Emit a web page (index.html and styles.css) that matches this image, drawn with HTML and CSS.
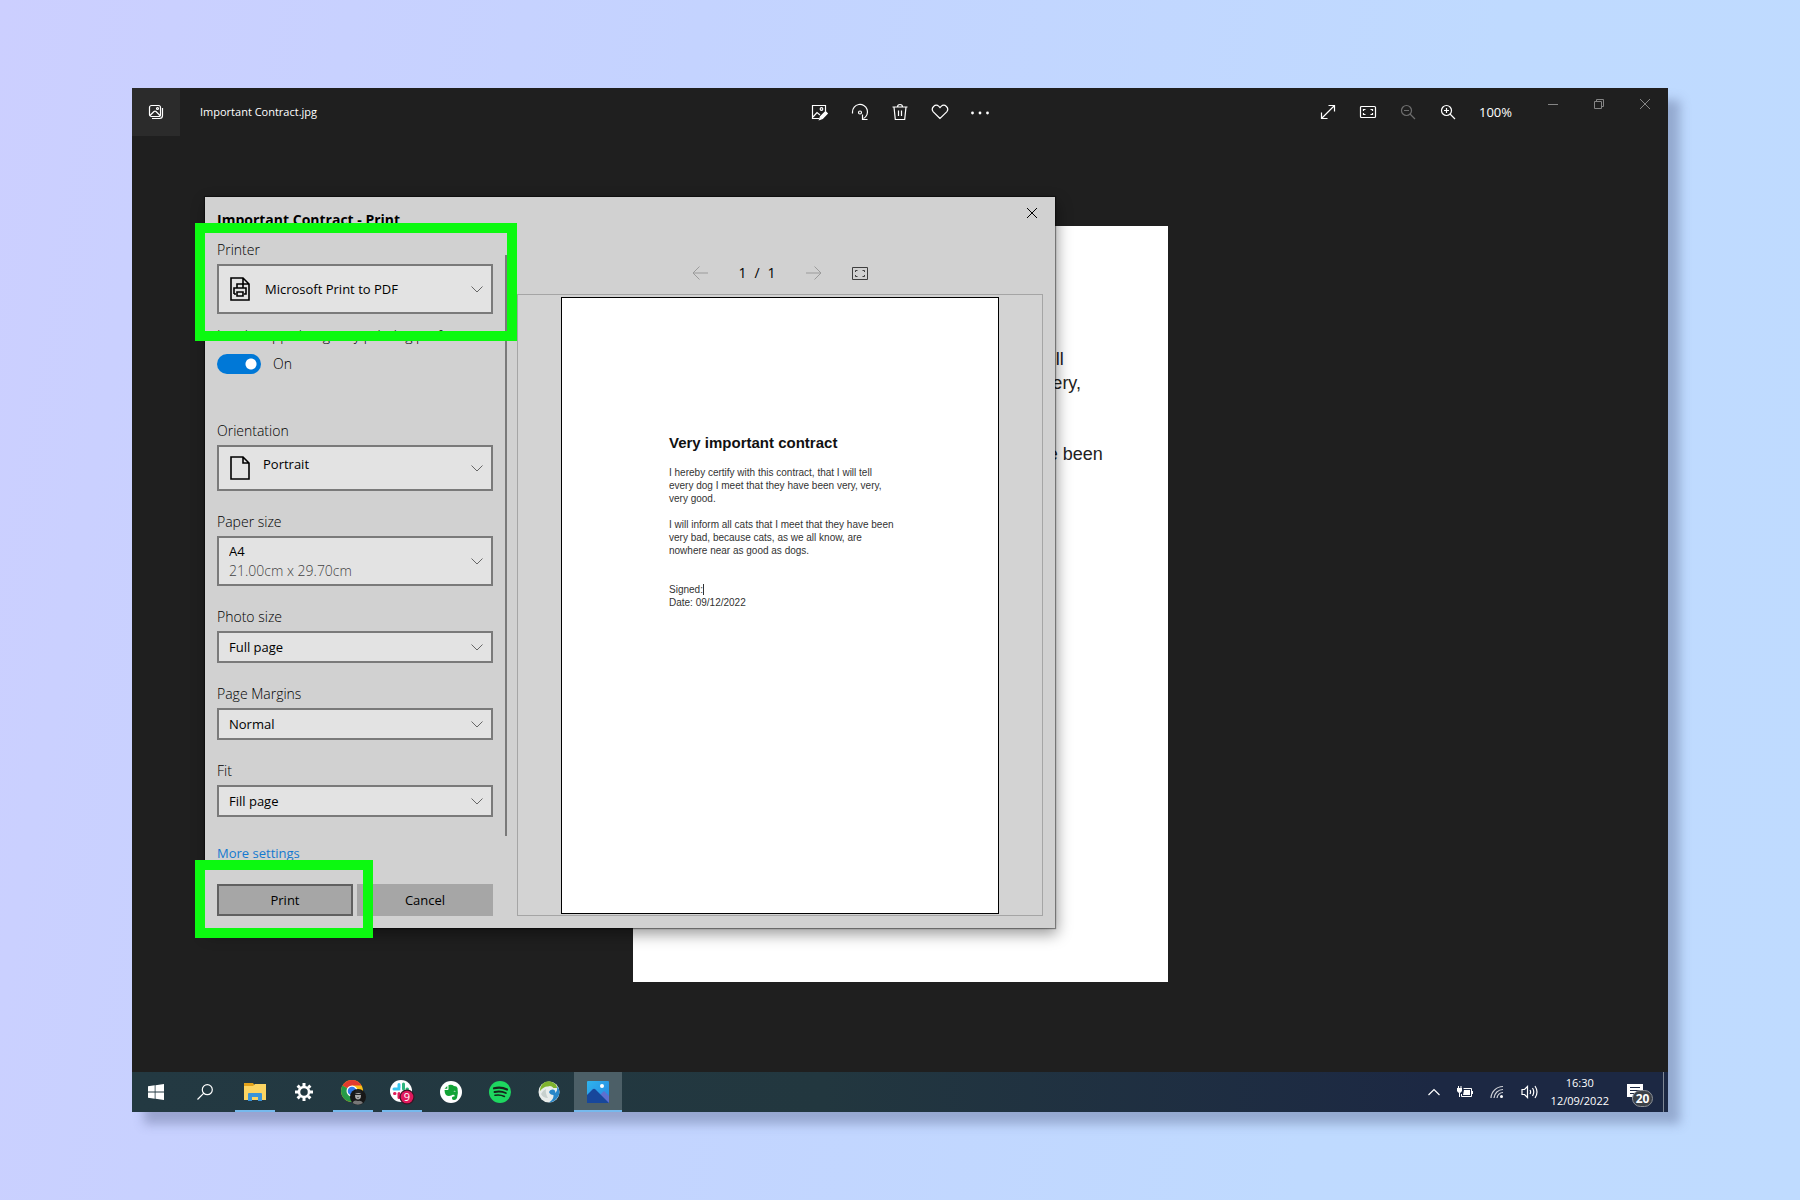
FILE: index.html
```
<!DOCTYPE html>
<html lang="en">
  <head>
    <meta charset="UTF-8" />
    <meta name="viewport" content="width=device-width, initial-scale=1.0" />
    <title>Important Contract - Print</title>
    <link rel="stylesheet" href="styles.css">
  </head>
  <body>
    <div class="desktop">
      <header class="titlebar">
        <div class="titlebar-left">
          <button type="button" class="gallery-btn" aria-label="All photos">
            <svg width="16" height="16" viewBox="0 0 16 16" class="line-icon">
              <rect x="1.5" y="1.5" width="11" height="11" rx="2" />
              <path d="M2 11.5 L6 7.5 Q7 6.7 8 7.5 L12 11.5 M14.5 4 V11.5 A3 3 0 0 1 11.500 14.500 H4" />
              <circle cx="9.500" cy="4.500" r="1" />
            </svg>
          </button>
          <span class="file-name">Important Contract.jpg</span>
        </div>
        <div class="tools">
          <button type="button" class="tool" aria-label="Edit">
            <svg width="18" height="18" viewBox="0 0 18 18" class="line-icon">
              <path d="M8 15.500 H1.500 V2.500 H14.500 V8" />
              <circle cx="10.500" cy="6" r="1.300" />
              <path d="M2 14 L6 9.500 L9 12" />
              <path d="M8.500 16.500 L9.500 13.500 L14.500 8.500 L16.300 10.500 L11.500 15.500 Z" fill="#fff" />
            </svg>
          </button>
          <button type="button" class="tool" aria-label="Rotate">
            <svg width="18" height="18" viewBox="0 0 18 18" class="line-icon">
              <path d="M1.500 10.500 V9 A7.500 7.500 0 1 1 12.500 15.500 M11.500 11.500 V16.500 H16.500" />
              <circle cx="9" cy="9.500" r="1.500" />
            </svg>
          </button>
          <button type="button" class="tool" aria-label="Delete">
            <svg width="18" height="18" viewBox="0 0 18 18" class="line-icon">
              <path d="M1.500 4 H16.500 M6.500 4 Q6.500 1.500 9 1.500 Q11.500 1.500 11.500 4 M3 4 L4.300 16.500 H13.700 L15 4 M7.500 7.500 V13 M10.500 7.500 V13" />
            </svg>
          </button>
          <button type="button" class="tool" aria-label="Favourite">
            <svg width="18" height="18" viewBox="0 0 18 18" class="line-icon">
              <path d="M9 15.500 L2.300 8.800 A3.900 3.900 0 0 1 7.900 3.400 L9 4.600 L10.100 3.400 A3.900 3.900 0 0 1 15.700 8.800 Z" />
            </svg>
          </button>
          <button type="button" class="tool" aria-label="More">
            <svg width="20" height="18" viewBox="0 0 20 18" fill="#fff">
              <circle cx="2.500" cy="10" r="1.400" />
              <circle cx="10" cy="10" r="1.400" />
              <circle cx="17.500" cy="10" r="1.400" />
            </svg>
          </button>
        </div>
        <div class="titlebar-right">
          <button type="button" class="tool" aria-label="Full screen">
            <svg width="16" height="16" viewBox="0 0 16 16" class="line-icon">
              <path d="M1.500 14.500 L14.500 1.500 M8.500 1.500 H14.500 V7.500 M1.500 8.500 V14.500 H7.500" />
            </svg>
          </button>
          <button type="button" class="tool" aria-label="Fit to window">
            <svg width="18" height="14" viewBox="0 0 18 14" class="line-icon">
              <rect x="1.500" y="1.500" width="15" height="11" rx="1" />
              <path d="M4.500 6 V4.500 H6.500 M11.500 4.500 H13.500 V6 M4.500 8 V9.500 H6.500 M11.500 9.500 H13.500 V8" />
            </svg>
          </button>
          <button type="button" class="tool" aria-label="Zoom out" disabled>
            <svg width="16" height="16" viewBox="0 0 16 16" class="line-icon">
              <circle cx="6.500" cy="6.500" r="5" />
              <path d="M10 10 L15 15 M4 6.500 H9" />
            </svg>
          </button>
          <button type="button" class="tool" aria-label="Zoom in">
            <svg width="16" height="16" viewBox="0 0 16 16" class="line-icon">
              <circle cx="6.500" cy="6.500" r="5" />
              <path d="M10 10 L15 15 M4 6.500 H9 M6.500 4 V9" />
            </svg>
          </button>
          <span class="zoom-level">100%</span>
          <div class="window-controls">
            <button type="button" aria-label="Minimise">
              <svg width="10" height="10" viewBox="0 0 10 10" class="thin-icon"><path d="M0 5.500 H10" /></svg>
            </button>
            <button type="button" aria-label="Restore">
              <svg width="10" height="10" viewBox="0 0 10 10" class="thin-icon"><path d="M.5 2.500 H7.500 V9.500 H.5 Z M2.500 2.500 V.5 H9.500 V7.500 H7.500" /></svg>
            </button>
            <button type="button" aria-label="Close">
              <svg width="10" height="10" viewBox="0 0 10 10" class="thin-icon"><path d="M0 0 L10 10 M10 0 L0 10" /></svg>
            </button>
          </div>
        </div>
      </header>

      <main class="viewer">
        <article class="photo">
          <p>I hereby certify with this contract, that I will tell<br>every dog I meet that they have been very, very,<br>very good.</p>
          <p>I will inform all cats that I meet that they have been</p>
        </article>

        <section class="dialog">
          <div class="options">
            <h1>Important Contract - Print</h1>
            <form id="printForm">
              <div class="field">
                <label for="printer">Printer</label>
                <div class="select tall">
                  <select id="printer" class="with-icon"><option>Microsoft Print to PDF</option></select>
                  <svg class="option-icon" width="20" height="24" viewBox="0 0 20 24">
                    <path d="M1 1 H13 L19 7 V23 H1 Z M13 1 V7 H19" />
                    <path d="M7 11 V7 H13 V11 M4 17 V11 H16 V17 H14 M4 17 H6 M7 15 H13 V19 H7 Z" />
                  </svg>
                  <svg class="chevron" width="12" height="7" viewBox="0 0 12 7"><path d="M.5 .5 L6 6 L11.500 .5" /></svg>
                </div>
              </div>
              <div class="manage">
                <label for="manage">Let the app change my printing preferences</label>
                <div class="toggle-row">
                  <input type="checkbox" id="manage" class="toggle" checked />
                  <span>On</span>
                </div>
              </div>
              <div class="field">
                <label for="orientation">Orientation</label>
                <div class="select medium">
                  <select id="orientation" class="with-icon"><option>Portrait</option></select>
                  <svg class="option-icon" width="20" height="24" viewBox="0 0 20 24">
                    <path d="M1 1 H13 L19 7 V23 H1 Z M13 1 V7 H19" />
                  </svg>
                  <svg class="chevron" width="12" height="7" viewBox="0 0 12 7"><path d="M.5 .5 L6 6 L11.500 .5" /></svg>
                </div>
              </div>
              <div class="field">
                <label for="paper">Paper size</label>
                <div class="select tall two-line">
                  <select id="paper"><option>A4</option></select>
                  <span class="detail">21.00cm x 29.70cm</span>
                  <svg class="chevron" width="12" height="7" viewBox="0 0 12 7"><path d="M.5 .5 L6 6 L11.500 .5" /></svg>
                </div>
              </div>
              <div class="field">
                <label for="photoSize">Photo size</label>
                <div class="select">
                  <select id="photoSize"><option>Full page</option></select>
                  <svg class="chevron" width="12" height="7" viewBox="0 0 12 7"><path d="M.5 .5 L6 6 L11.500 .5" /></svg>
                </div>
              </div>
              <div class="field">
                <label for="margins">Page Margins</label>
                <div class="select">
                  <select id="margins"><option>Normal</option></select>
                  <svg class="chevron" width="12" height="7" viewBox="0 0 12 7"><path d="M.5 .5 L6 6 L11.500 .5" /></svg>
                </div>
              </div>
              <div class="field">
                <label for="fit">Fit</label>
                <div class="select">
                  <select id="fit"><option>Fill page</option></select>
                  <svg class="chevron" width="12" height="7" viewBox="0 0 12 7"><path d="M.5 .5 L6 6 L11.500 .5" /></svg>
                </div>
              </div>
              <a href="#" class="more-link">More settings</a>
              <div class="actions">
                <button type="submit" class="print-btn">Print</button>
                <button type="button">Cancel</button>
              </div>
            </form>
          </div>
          <div class="scrollbar"></div>
          <div class="preview">
            <button type="button" class="close-btn" aria-label="Close">
              <svg width="12" height="12" viewBox="0 0 12 12"><path d="M1 1 L11 11 M11 1 L1 11" /></svg>
            </button>
            <nav class="pager">
              <button type="button" aria-label="Previous page" disabled>
                <svg width="16" height="14" viewBox="0 0 16 14"><path d="M16 7 H1 M7.500 .5 L1 7 L7.500 13.500" /></svg>
              </button>
              <div class="page-count"><span>1</span><span>/</span><span>1</span></div>
              <button type="button" aria-label="Next page" disabled>
                <svg width="16" height="14" viewBox="0 0 16 14"><path d="M0 7 H15 M8.500 .5 L15 7 L8.500 13.500" /></svg>
              </button>
              <button type="button" class="fit-btn" aria-label="Fit to page">
                <svg width="16" height="13" viewBox="0 0 16 13"><path d="M.5 .5 H15.500 V12.500 H.5 Z M3.500 5 V3.500 H5.500 M10.500 3.500 H12.500 V5 M3.500 8 V9.500 H5.500 M10.500 9.500 H12.500 V8" /></svg>
              </button>
            </nav>
            <div class="preview-frame">
              <article class="sheet">
                <h2>Very important contract</h2>
                <p>I hereby certify with this contract, that I will tell<br>every dog I meet that they have been very, very,<br>very good.</p>
                <p>I will inform all cats that I meet that they have been<br>very bad, because cats, as we all know, are<br>nowhere near as good as dogs.</p>
                <p class="signature">Signed:<span class="caret"></span><br>Date: 09/12/2022</p>
              </article>
            </div>
          </div>
          <div class="marker marker-printer"></div>
          <div class="marker marker-print"></div>
        </section>
      </main>

      <footer class="taskbar">
        <div class="apps">
          <button type="button" class="app" aria-label="Start">
            <svg width="16" height="16" viewBox="0 0 16 16" fill="#fff">
              <path d="M0 2.300 L6.700 1.300 V7.600 H0 Z M7.500 1.200 L16 0 V7.600 H7.500 Z M0 8.400 H6.700 V14.700 L0 13.700 Z M7.500 8.400 H16 V16 L7.500 14.800 Z" />
            </svg>
          </button>
          <button type="button" class="app search" aria-label="Search">
            <svg width="16" height="16" viewBox="0 0 16 16" class="line-icon">
              <circle cx="10.300" cy="5.700" r="5" />
              <path d="M6.800 9.200 L.5 15.500" />
            </svg>
          </button>
          <button type="button" class="app running" aria-label="File Explorer">
            <svg width="22" height="18" viewBox="0 0 22 18">
              <path d="M0 0 H9 L10.500 2 V6 H0 Z" fill="#e3a21a" />
              <path d="M0 3 H9 L11 1 H22 V17 H0 Z" fill="#fcd462" />
              <path d="M4 18 V11 Q4 10 5 10 H17 Q18 10 18 11 V18 H14 V14 H8 V18 Z" fill="#3b93d8" />
            </svg>
          </button>
          <button type="button" class="app" aria-label="Settings">
            <svg width="18" height="18" viewBox="0 0 18 18" fill="none" stroke="#fff">
              <circle cx="9" cy="9" r="5" stroke-width="2.500" />
              <path d="M9 0 V3 M9 15 V18 M0 9 H3 M15 9 H18 M2.600 2.600 L4.800 4.800 M13.200 13.200 L15.400 15.400 M15.400 2.600 L13.200 4.800 M4.800 13.200 L2.600 15.400" stroke-width="3" />
            </svg>
          </button>
          <button type="button" class="app running" aria-label="Chrome">
            <svg width="26" height="26" viewBox="0 0 26 26">
              <circle cx="12" cy="12" r="11" fill="#fbc116" />
              <path d="M12 12 L2.500 6.500 A11 11 0 0 1 21.500 6.500 H12 Z" fill="#e33b2e" />
              <path d="M12 12 L2.500 6.500 A11 11 0 0 0 12 23 L16.500 14.500 Z" fill="#269a48" />
              <circle cx="12" cy="12" r="5.500" fill="#fff" />
              <circle cx="12" cy="12" r="4.300" fill="#2f7bea" />
              <circle cx="18" cy="18" r="8" fill="#171717" />
              <ellipse cx="18" cy="16.500" rx="3" ry="4" fill="#aaa" />
              <path d="M15 15.500 H21 M18 18 V19" stroke="#222" />
              <path d="M12.500 24 Q14 20.500 18 22 Q21 21 23 24 Q18 27.500 12.500 24 Z" fill="#777" />
              <path d="M14.500 15 Q15 10.500 18 11 Q22 11 21.500 15 Q19 13 14.500 15 Z" fill="#222" />
            </svg>
          </button>
          <button type="button" class="app running" aria-label="Slack">
            <svg width="26" height="26" viewBox="0 0 26 26">
              <circle cx="12" cy="12" r="11" fill="#fff" />
              <g stroke-width="3" stroke-linecap="round">
                <path d="M10 5.500 V9 M5 10 H10" stroke="#36c5f0" />
                <path d="M14.500 5 V10 M18.500 10 H18" stroke="#2eb67d" />
                <path d="M10 14.500 V18.500 M5.500 14.500 H6" stroke="#e01e5a" />
                <path d="M14.500 14.500 H19 M14.500 18.500 V18" stroke="#ecb22e" />
              </g>
              <circle cx="18" cy="18" r="7.500" fill="#3c1424" />
              <circle cx="18" cy="18" r="6.300" fill="#e0195d" />
              <text x="18" y="22" class="count">9</text>
            </svg>
          </button>
          <button type="button" class="app" aria-label="Evernote">
            <svg width="24" height="24" viewBox="0 0 24 24">
              <circle cx="12" cy="12" r="11" fill="#fff" />
              <path d="M9.500 5 Q13 4 15 6 Q18 6 18.500 8 Q19.500 13 18 18 Q17 20.500 14.500 20 Q12.500 19.500 13 17.500 Q13.500 16 15.500 16.500 V15 Q13 14.500 12.500 15.500 Q9 16.500 7 15 Q5.500 13 5.500 10 H8.500 Q9.500 10 9.500 9 Z" fill="#12a336" />
              <path d="M5.500 8.800 L8.300 6 V8.800 Z" fill="#12a336" />
              <path d="M14.500 11.500 Q15.500 10 16.800 11.500 Z" fill="#fff" />
            </svg>
          </button>
          <button type="button" class="app" aria-label="Spotify">
            <svg width="24" height="24" viewBox="0 0 24 24" fill="none" stroke="#16241b" stroke-linecap="round">
              <circle cx="12" cy="12" r="11" fill="#1ed760" stroke="none" />
              <path d="M6 8.300 Q13 6.500 19 9.500" stroke-width="2.200" />
              <path d="M6.500 12 Q12.500 10.500 17.800 13" stroke-width="1.900" />
              <path d="M7 15.300 Q12 14.200 16.500 16.500" stroke-width="1.500" />
            </svg>
          </button>
          <button type="button" class="app" aria-label="Browser">
            <svg width="24" height="24" viewBox="0 0 24 24">
              <circle cx="12" cy="12" r="10.500" fill="#e8ecea" />
              <path d="M6 3.500 Q10 0 15 2 Q20 4 20 8 L16.500 8 Q14 5 11 6.500 Q7 6 3 11 Q3 6 6 3.500 Z" fill="#7fb32d" />
              <path d="M20 6 Q24 11 21.500 16 Q18 22 12 22.500 Q17 19 16.500 15 Q13 15 12 12 Q13 9 16 9.500 Q19 10 18 13 Q21 11 20 6 Z" fill="#2787c9" />
              <path d="M4 14 Q6 10 9 9 Q8 13 11 18 Q6 18 4 14 Z" fill="#c7d0cd" />
            </svg>
          </button>
          <button type="button" class="app running active" aria-label="Photos">
            <svg width="22" height="22" viewBox="0 0 22 22">
              <defs>
                <linearGradient id="sky" x1="0" y1="0" x2="1" y2="1">
                  <stop offset="0" stop-color="#2fb4ee" />
                  <stop offset="1" stop-color="#2484e0" />
                </linearGradient>
              </defs>
              <rect width="22" height="22" rx="1" fill="url(#sky)" />
              <path d="M11 16 L17 10 L22 15 V22 H14 Z" fill="#5d6fd0" />
              <path d="M0 14 L5.500 8.500 Q7 7 8.500 8.500 L22 22 H0 Z" fill="#17479b" />
              <circle cx="15" cy="5" r="2" fill="#fff" />
            </svg>
          </button>
        </div>
        <div class="tray">
          <div class="tray-icons">
            <svg width="12" height="8" viewBox="0 0 12 8" class="line-icon"><path d="M.5 7 L6 1.500 L11.500 7" /></svg>
            <svg width="16" height="12" viewBox="0 0 16 12">
              <path d="M6.500 2.500 H14.500 V10.500 H4.500 V8" fill="none" stroke="#fff" />
              <path d="M7 4 H13 V9 H6 Z M15 5 H16 V8 H15 Z M0 2 H5 V5 Q4 7 2.500 7 Q1 7 0 5 Z M1 0 H2 V2 H1 Z M3.500 0 H4.500 V2 H3.500 Z M2 7 H3 V11 H2 Z" fill="#fff" />
            </svg>
            <svg width="14" height="14" viewBox="0 0 14 14" class="line-icon">
              <path d="M1 13 A12 12 0 0 1 13 1.500 M4 13 A9 9 0 0 1 13 4.500 M7 13 A6 6 0 0 1 13 7.500" opacity=".8" />
              <circle cx="11.500" cy="11.500" r="1.500" fill="#fff" stroke="none" />
            </svg>
            <svg width="17" height="16" viewBox="0 0 17 16" class="line-icon">
              <path d="M1 5.500 H3.500 L6.500 2.500 V13.500 L3.500 10.500 H1 Z M9 6 Q10.200 8 9 10 M11.500 4 Q14 8 11.500 12 M14 2 Q18 8 14 14" />
            </svg>
          </div>
          <time class="clock">16:30<br>12/09/2022</time>
          <button type="button" class="notifications" aria-label="Notifications">
            <svg width="16" height="16" viewBox="0 0 16 16">
              <path d="M0 0 H16 V13 H8 L5 16 V13 H0 Z" fill="#fff" />
              <path d="M3 3.500 H13 M3 6.500 H13 M3 9.500 H9" stroke="#1c2843" />
            </svg>
            <span class="badge">20</span>
          </button>
          <div class="show-desktop"></div>
        </div>
      </footer>
    </div>
  </body>
</html>
```
FILE: styles.css
```
* {
  box-sizing: border-box;
}
body {
  margin: 0;
  height: 100vh;
  padding: 88px 132px;
  font-family: "Open Sans", "Noto Sans", sans-serif;
  font-size: 14px;
  line-height: 20px;
  color: #000;
  background: linear-gradient(100deg, #cccfff, #c4d3ff 35%, #bfdaff 75%, #bfdbff);
}
button {
  display: flex;
  justify-content: center;
  align-items: center;
  padding: 0;
  border: none;
  background: none;
  color: inherit;
  font: inherit;
}
.line-icon {
  fill: none;
  stroke: #fff;
  stroke-width: 1.2;
}
.desktop {
  display: flex;
  flex-direction: column;
  height: 100%;
  background: #1f1f1f;
  box-shadow: 12px 12px 10px rgba(70, 80, 120, 0.35);
}

/* title bar */
.titlebar {
  display: grid;
  grid-template-columns: 1fr auto 1fr;
  height: 48px;
  color: #fff;
}
.titlebar-left,
.tools,
.titlebar-right {
  display: flex;
  align-items: center;
}
.titlebar-left {
  gap: 20px;
}
.titlebar-right {
  justify-content: flex-end;
}
.gallery-btn {
  width: 48px;
  height: 48px;
  background: #2b2b2b;
}
.file-name {
  font-size: 11px;
  line-height: 18px;
}
.tool {
  width: 40px;
  height: 48px;
}
.tool:disabled {
  opacity: 0.35;
}
.zoom-level {
  width: 62px;
  padding-left: 11px;
  font-size: 13px;
}
.window-controls {
  display: flex;
  align-self: flex-start;
}
.window-controls button {
  width: 46px;
  height: 32px;
}
.thin-icon {
  fill: none;
  stroke: #858585;
}

/* picture behind the dialog */
.viewer {
  position: relative;
  flex: 1;
  display: flex;
  justify-content: center;
  align-items: center;
}
.photo {
  width: 535px;
  height: 756px;
  padding: 121px 60px 0 66px;
  background: #fff;
  color: #222;
  font: 18px/24px "Liberation Sans", Arial, sans-serif;
  white-space: nowrap;
}
.photo p {
  margin: 0 0 23px;
}

/* print dialog */
.dialog {
  position: absolute;
  left: 73px;
  top: 61px;
  width: 850px;
  display: flex;
  background: #d1d1d1;
  box-shadow: 0 0 1px 1px rgba(0, 0, 0, 0.4), 2px 6px 14px rgba(0, 0, 0, 0.4);
}
.options {
  width: 288px;
  padding: 12px 0 12px 12px;
}
.options h1 {
  margin: 0 0 8px;
  font-size: 14px;
  line-height: 22px;
  font-weight: bold;
  white-space: nowrap;
}
.field {
  margin-bottom: 20px;
}
.field label,
.manage label {
  display: block;
  margin-bottom: 3px;
  line-height: 22px;
  font-weight: 300;
  white-space: nowrap;
}
.select {
  display: grid;
  align-items: center;
  height: 32px;
}
.select > * {
  grid-area: 1 / 1;
}
.select select {
  width: 100%;
  height: 100%;
  padding: 0 32px 0 10px;
  border: 2px solid #7a7a7a;
  border-radius: 0;
  background: #e3e3e3;
  color: #000;
  font: inherit;
  font-size: 13px;
  appearance: none;
}
.select.tall {
  height: 50px;
}
.select.medium {
  height: 46px;
}
.select .with-icon {
  padding-left: 46px;
}
.medium .with-icon {
  padding-left: 44px;
  padding-bottom: 8px;
}
.option-icon {
  margin-left: 13px;
  fill: none;
  stroke: #000;
  stroke-width: 1.6;
  pointer-events: none;
}
.two-line select {
  padding-bottom: 20px;
}
.detail {
  align-self: end;
  padding: 0 0 5px 12px;
  color: #444;
  font-size: 14px;
  font-weight: 300;
  pointer-events: none;
}
.chevron {
  justify-self: end;
  margin-right: 10px;
  fill: none;
  stroke: #666;
  pointer-events: none;
}
.manage {
  margin: -9px 0 46px;
}
.manage label {
  margin-bottom: 7px;
}
.toggle-row {
  display: flex;
  gap: 12px;
  height: 20px;
  font-weight: 300;
}
.toggle {
  width: 44px;
  height: 20px;
  margin: 0;
  border-radius: 10px;
  background: #0078d7 radial-gradient(circle at 34px 10px, #fff 5px, transparent 6px);
  appearance: none;
}
.more-link {
  display: block;
  margin: 25px 0 20px;
  color: #1479cf;
  font-size: 13px;
  line-height: 22px;
  text-decoration: none;
}
.actions {
  display: grid;
  grid-template-columns: 1fr 1fr;
  gap: 4px;
}
.actions button {
  height: 32px;
  background: #a6a6a6;
  font-size: 13px;
}
.actions .print-btn {
  border: 2px solid #606060;
}
.scrollbar {
  width: 2px;
  margin: 58px 10px 92px 12px;
  background: #7a7a7a;
}
.preview {
  flex: 1;
  display: flex;
  flex-direction: column;
}
.preview svg {
  fill: none;
  stroke: #000;
}
.close-btn {
  align-self: flex-end;
  width: 46px;
  height: 32px;
}
.pager {
  display: flex;
  justify-content: center;
  align-items: center;
  height: 42px;
  margin: 23px 12px 0 0;
}
.pager button {
  width: 32px;
  height: 32px;
}
.pager button:disabled {
  opacity: 0.25;
}
.pager .fit-btn {
  margin-left: 14px;
  opacity: 0.7;
}
.page-count {
  display: flex;
  justify-content: center;
  gap: 8px;
  width: 82px;
}
.preview-frame {
  flex: 1;
  display: flex;
  justify-content: center;
  margin: 0 12px 12px 0;
  padding: 2px 0 1px;
  border: 1px solid #a5a5a5;
  background: #d3d3d3;
}
.sheet {
  width: 438px;
  padding: 135px 20px 0 107px;
  border: 1px solid #000;
  background: #fff;
  color: #333;
  font: 10px/13px "Liberation Sans", Arial, sans-serif;
  white-space: nowrap;
}
.sheet h2 {
  margin: 0 0 13px;
  color: #111;
  font-size: 15px;
  line-height: 20px;
}
.sheet p {
  margin: 0 0 13px;
}
.sheet .signature {
  margin-top: 26px;
}
.caret {
  border-right: 1px solid #333;
}
.marker {
  position: absolute;
  left: -10px;
  border: 10px solid #0cf910;
  pointer-events: none;
}
.marker-printer {
  top: 26px;
  width: 322px;
  height: 118px;
}
.marker-print {
  bottom: -10px;
  width: 178px;
  height: 78px;
}

/* taskbar */
.taskbar {
  display: flex;
  justify-content: space-between;
  height: 40px;
  background: linear-gradient(90deg, #233942, #22373f 45%, #1c2843 85%, #1c2843);
  color: #fff;
}
.apps {
  display: flex;
  gap: 1px;
}
.app {
  position: relative;
  width: 48px;
}
.app.search {
  margin-right: 1px;
}
.running::after {
  content: "";
  position: absolute;
  left: 4px;
  right: 4px;
  bottom: 0;
  height: 2px;
  background: #76b9ed;
}
.active {
  background: #4c5f67;
}
.active::after {
  left: 0;
  right: 0;
}
.count {
  fill: #fff;
  font-size: 11px;
  text-anchor: middle;
}
.tray,
.tray-icons {
  display: flex;
  align-items: center;
}
.tray-icons {
  gap: 17px;
}
.clock {
  margin: 0 18px 0 13px;
  font-size: 11px;
  line-height: 18px;
  text-align: center;
}
.notifications {
  position: relative;
  margin-right: 20px;
}
.badge {
  position: absolute;
  left: 5px;
  top: 6px;
  width: 21px;
  height: 17px;
  border: 1px solid #8b8f96;
  border-radius: 9px;
  background: #3c4148;
  font-size: 12px;
  font-weight: bold;
  line-height: 15px;
}
.show-desktop {
  width: 5px;
  height: 40px;
  border-left: 1px solid #7f8795;
}
```
